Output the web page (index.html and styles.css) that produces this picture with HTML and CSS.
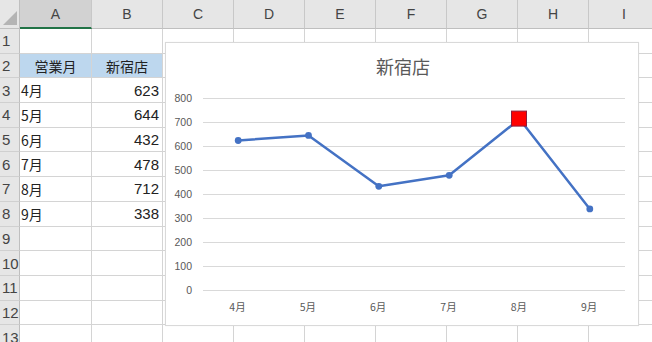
FILE: index.html
```html
<!DOCTYPE html>
<html lang="ja">
<head>
<meta charset="utf-8">
<link rel="stylesheet" href="styles.css">
</head>
<body>
<div class="sheet">
  <div class="corner"><span class="tri"></span></div>
  <div class="ch sel">A</div><div class="ch">B</div><div class="ch">C</div><div class="ch">D</div><div class="ch">E</div><div class="ch">F</div><div class="ch">G</div><div class="ch">H</div><div class="ch">I</div>

  <div class="rh">1</div><div class="c"></div><div class="c"></div><div class="c"></div><div class="c"></div><div class="c"></div><div class="c"></div><div class="c"></div><div class="c"></div><div class="c"></div>
  <div class="rh">2</div><div class="c hd">営業月</div><div class="c hd">新宿店</div><div class="c"></div><div class="c"></div><div class="c"></div><div class="c"></div><div class="c"></div><div class="c"></div><div class="c"></div>
  <div class="rh">3</div><div class="c">4月</div><div class="c num">623</div><div class="c"></div><div class="c"></div><div class="c"></div><div class="c"></div><div class="c"></div><div class="c"></div><div class="c"></div>
  <div class="rh">4</div><div class="c">5月</div><div class="c num">644</div><div class="c"></div><div class="c"></div><div class="c"></div><div class="c"></div><div class="c"></div><div class="c"></div><div class="c"></div>
  <div class="rh">5</div><div class="c">6月</div><div class="c num">432</div><div class="c"></div><div class="c"></div><div class="c"></div><div class="c"></div><div class="c"></div><div class="c"></div><div class="c"></div>
  <div class="rh">6</div><div class="c">7月</div><div class="c num">478</div><div class="c"></div><div class="c"></div><div class="c"></div><div class="c"></div><div class="c"></div><div class="c"></div><div class="c"></div>
  <div class="rh">7</div><div class="c">8月</div><div class="c num">712</div><div class="c"></div><div class="c"></div><div class="c"></div><div class="c"></div><div class="c"></div><div class="c"></div><div class="c"></div>
  <div class="rh">8</div><div class="c">9月</div><div class="c num">338</div><div class="c"></div><div class="c"></div><div class="c"></div><div class="c"></div><div class="c"></div><div class="c"></div><div class="c"></div>
  <div class="rh">9</div><div class="c"></div><div class="c"></div><div class="c"></div><div class="c"></div><div class="c"></div><div class="c"></div><div class="c"></div><div class="c"></div><div class="c"></div>
  <div class="rh">10</div><div class="c"></div><div class="c"></div><div class="c"></div><div class="c"></div><div class="c"></div><div class="c"></div><div class="c"></div><div class="c"></div><div class="c"></div>
  <div class="rh">11</div><div class="c"></div><div class="c"></div><div class="c"></div><div class="c"></div><div class="c"></div><div class="c"></div><div class="c"></div><div class="c"></div><div class="c"></div>
  <div class="rh">12</div><div class="c"></div><div class="c"></div><div class="c"></div><div class="c"></div><div class="c"></div><div class="c"></div><div class="c"></div><div class="c"></div><div class="c"></div>
  <div class="rh">13</div><div class="c"></div><div class="c"></div><div class="c"></div><div class="c"></div><div class="c"></div><div class="c"></div><div class="c"></div><div class="c"></div><div class="c"></div>
</div>

<div class="chart">
  <svg width="474" height="284" viewBox="0 0 474 284">
    <text class="title" x="238" y="32" text-anchor="middle">新宿店</text>
    <g class="grid">
      <line x1="38" y1="56.5" x2="460" y2="56.5"/>
      <line x1="38" y1="80.5" x2="460" y2="80.5"/>
      <line x1="38" y1="104.5" x2="460" y2="104.5"/>
      <line x1="38" y1="128.5" x2="460" y2="128.5"/>
      <line x1="38" y1="152.5" x2="460" y2="152.5"/>
      <line x1="38" y1="176.5" x2="460" y2="176.5"/>
      <line x1="38" y1="200.5" x2="460" y2="200.5"/>
      <line x1="38" y1="224.5" x2="460" y2="224.5"/>
      <line x1="38" y1="248.5" x2="460" y2="248.5"/>
    </g>
    <g class="ylab" text-anchor="end">
      <text x="27" y="60">800</text>
      <text x="27" y="84">700</text>
      <text x="27" y="108">600</text>
      <text x="27" y="132">500</text>
      <text x="27" y="156">400</text>
      <text x="27" y="180">300</text>
      <text x="27" y="204">200</text>
      <text x="27" y="228">100</text>
      <text x="27" y="252">0</text>
    </g>
    <g class="xlab" text-anchor="middle">
      <text x="72.5" y="269">4月</text>
      <text x="142.8" y="269">5月</text>
      <text x="213.1" y="269">6月</text>
      <text x="283.5" y="269">7月</text>
      <text x="353.8" y="269">8月</text>
      <text x="424.1" y="269">9月</text>
    </g>
    <polyline class="series" points="73.2,98.5 143.5,93.4 213.8,144.3 284.2,133.3 354.5,77.1 424.8,166.9"/>
    <g class="dot">
      <circle cx="73.2" cy="98.5" r="3.4"/>
      <circle cx="143.5" cy="93.4" r="3.4"/>
      <circle cx="213.8" cy="144.3" r="3.4"/>
      <circle cx="284.2" cy="133.3" r="3.4"/>
      <circle cx="424.8" cy="166.9" r="3.4"/>
    </g>
    <rect class="hi" x="346.5" y="69.1" width="15" height="15"/>
  </svg>
</div>
</body>
</html>
```
FILE: styles.css
```css
html, body {
  margin: 0;
  padding: 0;
  background: #ffffff;
  overflow: hidden;
}
body {
  width: 652px;
  height: 342px;
  position: relative;
  font-family: "Noto Sans CJK JP", "Noto Sans", sans-serif;
}
.sheet {
  display: grid;
  grid-template-columns: 20px 72px repeat(8, 71px);
  grid-template-rows: 29px repeat(13, 24.7px);
  width: 660px;
}
.corner {
  background: #e6e6e6;
  border-right: 1px solid #bfbfbf;
  border-bottom: 1px solid #bfbfbf;
  box-sizing: border-box;
  position: relative;
}
.tri {
  position: absolute;
  right: 2px;
  bottom: 3px;
  width: 0;
  height: 0;
  border-left: 14px solid transparent;
  border-bottom: 14px solid #b4b4b4;
}
.ch {
  background: #e6e6e6;
  border-right: 1px solid #c8c8c8;
  border-bottom: 1px solid #bfbfbf;
  box-sizing: border-box;
  display: flex;
  align-items: center;
  justify-content: center;
  font-family: "Liberation Sans", "Noto Sans", sans-serif;
  font-size: 14px;
  color: #444444;
}
.ch.sel {
  background: #d2d2d2;
  border-bottom: 2px solid #217346;
}
.rh {
  background: #e6e6e6;
  border-right: 1px solid #bfbfbf;
  border-bottom: 1px solid #d0d0d0;
  box-sizing: border-box;
  display: flex;
  align-items: center;
  justify-content: flex-start;
  padding-left: 2px;
  font-family: "Liberation Sans", "Noto Sans", sans-serif;
  font-size: 15px;
  color: #444444;
  overflow: hidden;
}
.c {
  border-right: 1px solid #d4d4d4;
  border-bottom: 1px solid #d4d4d4;
  box-sizing: border-box;
  display: flex;
  align-items: center;
  padding: 0 1px;
  font-size: 14px;
  color: #222222;
  white-space: nowrap;
}
.c.hd {
  background: #bdd7ee;
  justify-content: center;
}
.c.num {
  justify-content: flex-end;
  font-family: "Liberation Sans", "Noto Sans", sans-serif;
  font-size: 15px;
  padding-right: 3px;
}
.chart {
  position: absolute;
  left: 165px;
  top: 42px;
  width: 474px;
  height: 284px;
  background: #ffffff;
  border: 1px solid #d9d9d9;
  box-sizing: border-box;
  box-shadow: 0 0 1px rgba(0,0,0,0.08);
}
.chart svg {
  display: block;
  position: absolute;
  left: -1px;
  top: -1px;
}
.title {
  font-family: "Noto Sans CJK JP", sans-serif;
  font-size: 18px;
  fill: #595959;
}
.grid line {
  stroke: #d9d9d9;
  stroke-width: 1;
}
.ylab text {
  font-family: "Liberation Sans", "Noto Sans", sans-serif;
  font-size: 10.5px;
  fill: #595959;
}
.xlab text {
  font-family: "Noto Sans CJK JP", sans-serif;
  font-size: 10.5px;
  fill: #595959;
}
.series {
  fill: none;
  stroke: #4472c4;
  stroke-width: 2.5;
  stroke-linejoin: round;
}
.dot circle {
  fill: #4472c4;
}
.hi {
  fill: #ff0000;
  stroke: #8e1d3a;
  stroke-width: 1;
}
```
